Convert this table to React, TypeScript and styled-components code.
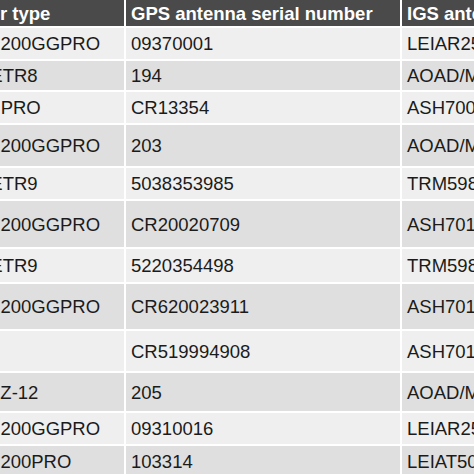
import React from "react";
import styled, { createGlobalStyle } from "styled-components";

const GlobalStyle = createGlobalStyle`
  html, body {
    margin: 0;
    padding: 0;
    background: #fff;
    overflow: hidden;
  }
  #root {
    width: 474px;
    height: 474px;
    overflow: hidden;
  }
`;

type Tone = "head" | "light" | "dark";

const StyledTable = styled.div`
  display: flex;
  flex-direction: column;
  gap: 2px;
  background: #fff;
  font-family: "Liberation Sans", Arial, sans-serif;
  font-size: 18.5px;
  color: #1b1b1b;
`;

const StyledRow = styled.div<{ $h: number }>`
  display: grid;
  grid-template-columns: 124px 274px 240px;
  column-gap: 2px;
  height: ${(p) => p.$h}px;
  flex-shrink: 0;
`;

const StyledCell = styled.div<{ $tone: Tone }>`
  display: flex;
  align-items: center;
  padding: 1px 5px 0 5px;
  white-space: nowrap;
  overflow: hidden;
  background: ${(p) =>
    p.$tone === "head" ? "#4a4a4a" : p.$tone === "dark" ? "#dfdfdf" : "#efefef"};
  color: ${(p) => (p.$tone === "head" ? "#fff" : "#1b1b1b")};
  font-weight: ${(p) => (p.$tone === "head" ? 700 : 400)};
`;

// first column is cut off at the left edge of the shot
const ClippedCell = styled(StyledCell)`
  padding-left: 0;
`;

const Cut = styled.span<{ $cut: number }>`
  margin-left: ${(p) => p.$cut}px;
`;

interface IRow {
    receiver: string;
    cut: number;
    serial: string;
    igs: string;
    h: number;
}

const rows: IRow[] = [
    { receiver: "GRX1200GGPRO", cut: -50, serial: "09370001", igs: "LEIAR25.R3", h: 31 },
    { receiver: "NETR8", cut: -23, serial: "194", igs: "AOAD/M_T", h: 29 },
    { receiver: "GX1230GGPRO", cut: -96, serial: "CR13354", igs: "ASH700936D_M", h: 31 },
    { receiver: "GRX1200GGPRO", cut: -50, serial: "203", igs: "AOAD/M_T", h: 41 },
    { receiver: "NETR9", cut: -23, serial: "5038353985", igs: "TRM59800.00", h: 31 },
    { receiver: "GRX1200GGPRO", cut: -50, serial: "CR20020709", igs: "ASH701945E_M", h: 46 },
    { receiver: "NETR9", cut: -23, serial: "5220354498", igs: "TRM59800.00", h: 33 },
    { receiver: "GRX1200GGPRO", cut: -50, serial: "CR620023911", igs: "ASH701945E_M", h: 45 },
    { receiver: "", cut: 0, serial: "CR519994908", igs: "ASH701945E_M", h: 40 },
    { receiver: "UZ-12", cut: -13, serial: "205", igs: "AOAD/M_T", h: 38 },
    { receiver: "GRX1200GGPRO", cut: -50, serial: "09310016", igs: "LEIAR25.R4", h: 31 },
    { receiver: "GRX1200PRO", cut: -50, serial: "103314", igs: "LEIAT504GG", h: 31 },
];

export default function App() {
    return (
        <>
            <GlobalStyle />
            <StyledTable>
                <StyledRow $h={26}>
                    <ClippedCell $tone="head">
                        <Cut $cut={-70}>Receiver type</Cut>
                    </ClippedCell>
                    <StyledCell $tone="head">GPS antenna serial number</StyledCell>
                    <StyledCell $tone="head">IGS antenna type</StyledCell>
                </StyledRow>
                {rows.map((r, i) => {
                    const tone: Tone = i % 2 === 0 ? "light" : "dark";
                    return (
                        <StyledRow key={i} $h={r.h}>
                            <ClippedCell $tone={tone}>
                                <Cut $cut={r.cut}>{r.receiver}</Cut>
                            </ClippedCell>
                            <StyledCell $tone={tone}>{r.serial}</StyledCell>
                            <StyledCell $tone={tone}>{r.igs}</StyledCell>
                        </StyledRow>
                    );
                })}
            </StyledTable>
        </>
    );
}
